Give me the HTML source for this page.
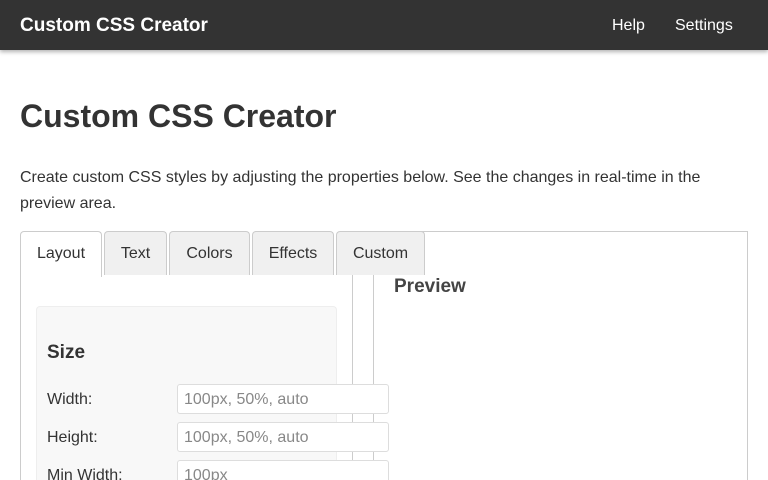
<!DOCTYPE html>
<html style="overflow:hidden;height:480px"><head><style>
*{box-sizing:border-box}
body{margin:0;font-family:"Liberation Sans",sans-serif;color:#333;background:#fff;width:768px;height:480px;overflow:hidden;position:relative}
.hdr{position:absolute;left:0;top:0;width:768px;height:50px;background:#333;box-shadow:0 2px 4px rgba(0,0,0,.3);color:#fff}
.hdr .t{position:absolute;left:20px;top:15px;font-size:19px;font-weight:bold}
.hdr .n{position:absolute;top:17px;font-size:16px}
h1{position:absolute;left:20px;top:98px;margin:0;font-size:32px;font-weight:bold}
p{position:absolute;left:20px;top:165px;margin:0;width:720px;font-size:16px;line-height:26px}
.prev{position:absolute;left:373px;top:231px;width:375px;height:249px;border:1px solid #ccc;border-bottom:none}
.prev h3{position:absolute;left:20px;top:44px;margin:0;font-size:19px;font-weight:bold;color:#444}
.tab{position:absolute;top:231px;height:44px;background:#f0f0f0;border:1px solid #ccc;border-bottom:none;border-radius:4px 4px 0 0;font-size:16px;text-align:center;line-height:44px}
.tab.a{background:#fff;height:46px;z-index:2}
.panel{position:absolute;left:20px;top:275px;width:333px;height:205px;background:#fff;border:1px solid #ccc;border-top:none;border-bottom:none;z-index:1}
.card{position:absolute;left:36px;top:306px;width:301px;height:174px;background:#f8f8f8;border:1px solid #eee;border-bottom:none;border-radius:4px 4px 0 0;z-index:2}
.card h4{position:absolute;left:10px;top:35px;margin:0;font-size:19px;font-weight:bold}
.lb{position:absolute;left:47px;font-size:16px;z-index:3}
.in{position:absolute;left:177px;width:212px;height:30px;background:#fff;border:1px solid #ddd;border-radius:3px;font-size:16px;color:#888;padding:6px 0 0 6px;z-index:3}
</style></head><body>
<div class="hdr"><span class="t">Custom CSS Creator</span><span class="n" style="left:612px">Help</span><span class="n" style="left:675px">Settings</span></div>
<h1>Custom CSS Creator</h1>
<p>Create custom CSS styles by adjusting the properties below. See the changes in real-time in the preview area.</p>
<div class="prev"><h3>Preview</h3></div>
<div class="tab a" style="left:20px;width:82px">Layout</div>
<div class="tab" style="left:104px;width:63px">Text</div>
<div class="tab" style="left:169px;width:81px">Colors</div>
<div class="tab" style="left:252px;width:82px">Effects</div>
<div class="tab" style="left:336px;width:89px">Custom</div>
<div class="panel"></div>
<div class="card"><h4>Size</h4></div>
<div class="lb" style="top:391px">Width:</div><div class="in" style="top:384px">100px, 50%, auto</div>
<div class="lb" style="top:429px">Height:</div><div class="in" style="top:422px">100px, 50%, auto</div>
<div class="lb" style="top:467px">Min Width:</div><div class="in" style="top:460px">100px</div>
</body></html>
